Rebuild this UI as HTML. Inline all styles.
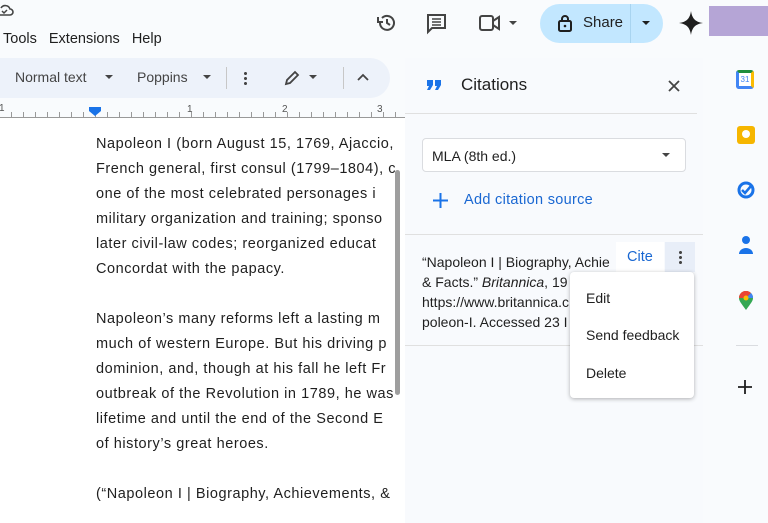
<!DOCTYPE html>
<html><head><style>
*{margin:0;padding:0;box-sizing:border-box}
body{width:768px;height:523px;overflow:hidden;background:#f9fbfd;font-family:"Liberation Sans",sans-serif;position:relative;color:#1f1f1f}
.a{position:absolute}
.doc{left:0;top:118px;width:405px;height:405px;background:#fff;overflow:hidden}
.t{font-size:14.5px;color:#1f1f1f;white-space:nowrap;left:96px;letter-spacing:0.55px}
.panel{left:405px;top:58px;width:298px;height:465px;background:#f8fafd}
</style></head><body>
<div class="a" style="left:0;top:0;width:405px;height:118px;background:#f9fbfd"></div>
<div class="doc a">
<div class="a t" style="top:18px">Napoleon I (born August 15, 1769, Ajaccio,</div>
<div class="a t" style="top:43px">French general, first consul (1799–1804), c</div>
<div class="a t" style="top:68px">one of the most celebrated personages i</div>
<div class="a t" style="top:93px">military organization and training; sponso</div>
<div class="a t" style="top:118px">later civil-law codes; reorganized educat</div>
<div class="a t" style="top:143px">Concordat with the papacy.</div>
<div class="a t" style="top:193px">Napoleon’s many reforms left a lasting m</div>
<div class="a t" style="top:218px">much of western Europe. But his driving p</div>
<div class="a t" style="top:243px">dominion, and, though at his fall he left Fr</div>
<div class="a t" style="top:268px">outbreak of the Revolution in 1789, he was</div>
<div class="a t" style="top:293px">lifetime and until the end of the Second E</div>
<div class="a t" style="top:318px">of history’s great heroes.</div>
<div class="a t" style="top:368px">(“Napoleon I | Biography, Achievements, &amp;</div>
</div>
<svg class="a" style="left:0;top:4px" width="16" height="14"><path d="M-2 11h12a3 3 0 0 0 0-6 5 5 0 0 0-9-1" fill="none" stroke="#444" stroke-width="1.6"/><path d="M2 7l2 2 3-3" fill="none" stroke="#444" stroke-width="1.5"/></svg>
<div class="a" style="left:3px;top:31px;font-size:14.5px;color:#1f1f1f;word-spacing:8px">Tools Extensions Help</div>
<div class="a" style="left:0;top:58px;width:390px;height:40px;background:#edf2fa;border-radius:0 20px 20px 0"></div>
<div class="a" style="left:15px;top:69px;font-size:14px;color:#444">Normal text</div>
<div class="a" style="left:105px;top:75px;border:4px solid transparent;border-top:4px solid #444"></div>
<div class="a" style="left:137px;top:69px;font-size:14px;color:#444">Poppins</div>
<div class="a" style="left:203px;top:75px;border:4px solid transparent;border-top:4px solid #444"></div>
<div class="a" style="left:226px;top:67px;width:1px;height:22px;background:#c7c7c7"></div>
<div class="a" style="left:244px;top:71px;width:3px;height:14px;background:radial-gradient(circle,#444 1.4px,transparent 1.6px) 0 0/3px 5px"></div>
<svg class="a" style="left:284px;top:70px" width="16" height="16"><path d="M2 14l1-4 8-8 3 3-8 8z" fill="none" stroke="#444" stroke-width="1.8"/></svg>
<div class="a" style="left:309px;top:75px;border:4px solid transparent;border-top:4px solid #444"></div>
<div class="a" style="left:343px;top:67px;width:1px;height:22px;background:#c7c7c7"></div>
<svg class="a" style="left:357px;top:73px" width="12" height="8"><path d="M1 7l5-5 5 5" fill="none" stroke="#444" stroke-width="1.8"/></svg>
<div class="a" style="left:0;top:117px;width:405px;height:1px;background:#999"></div>
<div class="a" style="left:0;top:112px;width:405px;height:5px;background:repeating-linear-gradient(90deg,transparent 0 11px,#999 11px 12px)"></div>
<div class="a" style="left:-1px;top:103px;font-size:10px;color:#555">1</div>
<div class="a" style="left:187px;top:104px;font-size:10px;color:#555">1</div>
<div class="a" style="left:282px;top:104px;font-size:10px;color:#555">2</div>
<div class="a" style="left:377px;top:104px;font-size:10px;color:#555">3</div>
<div class="a" style="left:89px;top:107px;width:12px;height:4px;background:#1a73e8"></div>
<div class="a" style="left:89px;top:111px;border:6px solid transparent;border-top:5px solid #1a73e8;border-bottom:0"></div>
<div class="a" style="left:395px;top:170px;width:5px;height:225px;background:#9e9e9e;border-radius:3px"></div>
<svg class="a" style="left:376px;top:12px" width="22" height="22"><path d="M4 11a7 7 0 1 0 2-5" fill="none" stroke="#444" stroke-width="2"/><path d="M2 5v5h5" fill="none" stroke="#444" stroke-width="2"/><path d="M11 7v4l3 2" fill="none" stroke="#444" stroke-width="2"/></svg>
<svg class="a" style="left:426px;top:13px" width="22" height="22"><path d="M2 2h17v13H6l-4 4z" fill="none" stroke="#444" stroke-width="2"/><path d="M6 6h9M6 9h9M6 12h9" stroke="#444" stroke-width="1.6"/></svg>
<svg class="a" style="left:479px;top:14px" width="22" height="18"><rect x="1" y="2" width="13" height="14" rx="2" fill="none" stroke="#444" stroke-width="2"/><path d="M14 7l6-4v12l-6-4" fill="none" stroke="#444" stroke-width="2"/></svg>
<div class="a" style="left:509px;top:21px;border:4px solid transparent;border-top:4px solid #444"></div>
<div class="a" style="left:540px;top:4px;width:123px;height:39px;background:#c2e7ff;border-radius:20px"></div>
<div class="a" style="left:630px;top:4px;width:1px;height:39px;background:#a8d4f0"></div>
<svg class="a" style="left:557px;top:14px" width="16" height="18"><rect x="2" y="7" width="12" height="10" rx="1.5" fill="none" stroke="#1f1f1f" stroke-width="2"/><path d="M5 7V5a3 3 0 0 1 6 0v2" fill="none" stroke="#1f1f1f" stroke-width="2"/><circle cx="8" cy="12" r="1.3" fill="#1f1f1f"/></svg>
<div class="a" style="left:583px;top:14px;font-size:15px;color:#1f1f1f">Share</div>
<div class="a" style="left:642px;top:21px;border:4px solid transparent;border-top:4px solid #1f1f1f"></div>
<svg class="a" style="left:679px;top:11px" width="24" height="24"><path d="M12 0C13 7 16 11 24 12 16 13 13 17 12 24 11 17 8 13 0 12 8 11 11 7 12 0z" fill="#1f1f1f"/></svg>
<div class="a" style="left:709px;top:6px;width:59px;height:30px;background:#b5a5d6"></div>
<div class="panel a"></div>
<svg class="a" style="left:427px;top:80px" width="14" height="10"><path d="M0 0h6v5l-3 5H0l2-4H0zM8 0h6v5l-3 5H8l2-4H8z" fill="#1a73e8"/></svg>
<div class="a" style="left:461px;top:75px;font-size:17px;color:#1f1f1f">Citations</div>
<svg class="a" style="left:668px;top:80px" width="12" height="12"><path d="M1 1l10 10M11 1L1 11" stroke="#444" stroke-width="1.8"/></svg>
<div class="a" style="left:405px;top:113px;width:292px;height:1px;background:#e0e0e0"></div>
<div class="a" style="left:422px;top:138px;width:264px;height:34px;background:#fff;border:1px solid #dadce0;border-radius:4px"></div>
<div class="a" style="left:432px;top:148px;font-size:14px;color:#1f1f1f">MLA (8th ed.)</div>
<div class="a" style="left:662px;top:153px;border:4px solid transparent;border-top:4px solid #444"></div>
<svg class="a" style="left:433px;top:193px" width="15" height="15"><path d="M7.5 0v15M0 7.5h15" stroke="#1a73e8" stroke-width="2"/></svg>
<div class="a" style="left:464px;top:192px;font-size:14.5px;color:#1967d2;letter-spacing:0.3px">Add citation source</div>
<div class="a" style="left:405px;top:234px;width:298px;height:1px;background:#e0e0e0"></div>
<div class="a" style="left:405px;top:345px;width:298px;height:1px;background:#e0e0e0"></div>
<div class="a" style="left:422px;top:252px;font-size:14px;color:#1f1f1f;line-height:20px;white-space:nowrap">“Napoleon I | Biography, Achie<br>&amp; Facts.” <i>Britannica</i>, 19<br>https://www.britannica.c<br>poleon-I. Accessed 23 I</div>
<div class="a" style="left:616px;top:242px;width:48px;height:30px;background:#fff"></div>
<div class="a" style="left:627px;top:249px;font-size:14.5px;color:#1967d2">Cite</div>
<div class="a" style="left:665px;top:242px;width:30px;height:30px;background:#e8eef8"></div>
<div class="a" style="left:679px;top:250px;width:3px;height:14px;background:radial-gradient(circle,#444 1.4px,transparent 1.6px) 0 0/3px 5px"></div>
<div class="a" style="left:570px;top:272px;width:124px;height:126px;background:#fff;border-radius:4px;box-shadow:0 1px 4px rgba(0,0,0,.3)"></div>
<div class="a" style="left:586px;top:290px;font-size:14px;color:#1f1f1f">Edit</div>
<div class="a" style="left:586px;top:327px;font-size:14px;color:#1f1f1f">Send feedback</div>
<div class="a" style="left:586px;top:365px;font-size:14px;color:#1f1f1f">Delete</div>
<div class="a" style="left:736px;top:70px;width:18px;height:19px;background:#fff;border:3px solid #4285f4;border-top-color:#1e8e3e;border-right-color:#fbbc04;border-radius:3px;font-size:8px;color:#4285f4;text-align:center;line-height:13px">31</div>
<div class="a" style="left:737px;top:126px;width:18px;height:18px;background:#f6b600;border-radius:3px"></div>
<div class="a" style="left:742px;top:130px;width:8px;height:8px;background:#fff;border-radius:50%"></div>
<svg class="a" style="left:736px;top:180px" width="20" height="20"><circle cx="10" cy="10" r="7" fill="none" stroke="#1a73e8" stroke-width="3"/><path d="M6 10l3 3 6-7" fill="none" stroke="#1a73e8" stroke-width="2.5"/></svg>
<svg class="a" style="left:737px;top:235px" width="18" height="20"><circle cx="9" cy="5" r="4" fill="#1a73e8"/><path d="M2 19a7 6 0 0 1 14 0z" fill="#1a73e8"/></svg>
<svg class="a" style="left:738px;top:291px" width="16" height="20"><path d="M8 19C3 12 1 10 1 7a7 7 0 0 1 14 0c0 3-2 5-7 12z" fill="#34a853"/><path d="M1 7a7 7 0 0 1 12-5L8 7z" fill="#ea4335"/><path d="M13 2a7 7 0 0 1 2 5L8 7z" fill="#4285f4"/><circle cx="8" cy="7" r="2.5" fill="#fbbc04"/></svg>
<div class="a" style="left:736px;top:345px;width:22px;height:1px;background:#dadce0"></div>
<svg class="a" style="left:738px;top:380px" width="14" height="14"><path d="M7 0v14M0 7h14" stroke="#1f1f1f" stroke-width="1.8"/></svg>
</body></html>
